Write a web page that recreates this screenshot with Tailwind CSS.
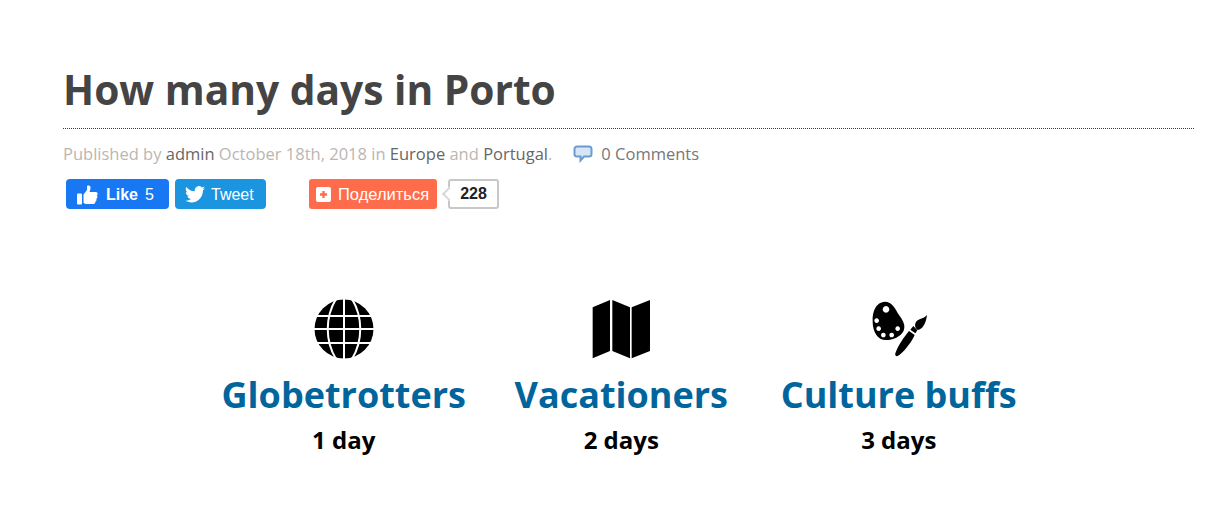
<!DOCTYPE html>
<html lang="en">
<head>
  <meta charset="UTF-8">
  <title>How many days in Porto</title>
  <script src="https://cdn.jsdelivr.net/npm/@tailwindcss/browser@4"></script>
</head>
<body class="bg-white font-['Open_Sans',sans-serif] overflow-hidden">
<div class="pl-[63px] pr-[19px] pt-[62px] h-[512px]">
  <h1 class="text-[40.7px] leading-[54px] font-bold text-[#444444] pb-[12px] border-b border-dotted border-[#223a7a]">How many days in Porto</h1>

  <div class="flex items-center mt-[13px] h-[24px] text-[16.5px] text-[#bbb6b2] whitespace-pre">
    <span>Published by <a class="text-[#666666]">admin</a> October 18th, 2018 in <a class="text-[#666666]">Europe</a> and <a class="text-[#666666]">Portugal</a>.</span>
    <svg class="ml-[21px] mr-[8px]" width="20" height="18" viewBox="0 0 20 18"><path d="M4 1.500h12a2.500 2.500 0 0 1 2.500 2.500v5a2.500 2.500 0 0 1-2.500 2.500h-5l-3.500 4v-4H4A2.500 2.500 0 0 1 1.500 9V4A2.500 2.500 0 0 1 4 1.500z" fill="#d6e6f7" stroke="#6c9bd2" stroke-width="2"/></svg>
    <span class="text-[#777777]">0 Comments</span>
  </div>

  <div class="flex items-center mt-[13px] h-[30px] ml-[3px] font-['Liberation_Sans',sans-serif]">
    <div class="flex items-center w-[103px] h-[30px] rounded-[4px] bg-[#1877f2] text-white text-[16px] pl-[11px] pt-[1px]">
      <svg width="21" height="20" viewBox="0 0 21 20" fill="#fff"><rect x="0" y="8.500" width="5" height="11" rx="1"/><path d="M6.500 9.500 10 5V1.500c0-1.500 3-1.500 3.500.5.300 1.500-.5 3.500-1 5h6.500c2 0 2 3 .8 3.500 1 1 .7 2.700-.5 3.200.6 1.200 0 2.500-1 2.800.3 1.300-.5 2.500-2 2.500H10c-1.500 0-2.500-.5-3.500-1z"/></svg>
      <span class="font-bold ml-[8px]">Like</span><span class="ml-[7px]">5</span>
    </div>
    <div class="flex items-center w-[91px] h-[30px] rounded-[4px] bg-[#1b95e0] text-white text-[16px] pl-[10px] ml-[6px] pt-[1px]">
      <svg width="20" height="17" viewBox="0 0 24 20" fill="#fff"><path d="M24 2.400a9.800 9.800 0 0 1-2.800.8A5 5 0 0 0 23.300.5a9.800 9.800 0 0 1-3.100 1.200 4.900 4.900 0 0 0-8.400 4.500A14 14 0 0 1 1.700.9a4.900 4.900 0 0 0 1.500 6.600 4.900 4.900 0 0 1-2.200-.6c0 2.400 1.700 4.400 3.900 4.900a4.900 4.900 0 0 1-2.200.1 4.900 4.900 0 0 0 4.600 3.400A9.900 9.900 0 0 1 0 17.300 14 14 0 0 0 7.500 19.500c9.100 0 14.300-7.700 14-14.600A10 10 0 0 0 24 2.400z"/></svg>
      <span class="ml-[6px]">Tweet</span>
    </div>
    <div class="flex items-center w-[128px] h-[30px] rounded-[3px] bg-[#ff6c4c] text-white text-[16.5px] pl-[7px] ml-[43px]">
      <span class="flex items-center justify-center w-[15px] h-[15px] rounded-[2px] bg-white">
        <svg width="7" height="7" viewBox="0 0 9 9" fill="#ff6c4c"><path d="M3 0h3v3h3v3H6v3H3V6H0V3h3z"/></svg>
      </span>
      <span class="ml-[7px]">Поделиться</span>
    </div>
    <div class="relative flex items-center justify-center w-[51px] h-[30px] ml-[11px] rounded-[3px] border-2 border-[#c8c8c8] bg-white text-[#222222] text-[16px] font-bold">
      228
      <span class="absolute left-[-6px] top-[8px] w-[10px] h-[10px] rotate-45 bg-white border-l-2 border-b-2 border-[#d8d8d8]"></span>
    </div>
  </div>

  <div class="flex mt-[90px] ml-[142px] text-center">
    <div class="w-[277.5px] flex flex-col items-center">
      <svg width="60" height="60" viewBox="0 0 60 60">
        <circle cx="30" cy="30" r="29.500" fill="#000"/>
        <g fill="none" stroke="#fff" stroke-width="2">
          <path d="M0 30h60M30 0v60M3 17h54M3 44h54"/>
          <path d="M22 0C11 18 11 42 22 60M38 0c11 18 11 42 0 60"/>
        </g>
      </svg>
      <h2 class="text-[36px] leading-[48px] font-bold text-[#00659c] mt-[12px] whitespace-nowrap">Globetrotters</h2>
      <p class="text-[24px] leading-[30px] font-bold text-black mt-[6px]">1 day</p>
    </div>
    <div class="w-[277.5px] flex flex-col items-center">
      <svg width="60" height="60" viewBox="33 27 180 180" fill="#000">
        <path d="M38 52 90 30V183L38 205zM97 30 150 52V205L97 183zM155 52 210 30V183L155 205z"/>
      </svg>
      <h2 class="text-[36px] leading-[48px] font-bold text-[#00659c] mt-[12px] whitespace-nowrap">Vacationers</h2>
      <p class="text-[24px] leading-[30px] font-bold text-black mt-[6px]">2 days</p>
    </div>
    <div class="w-[277.5px] flex flex-col items-center">
      <svg width="60" height="60" viewBox="24 27 180 180" fill="#000">
        <path fill-rule="evenodd" d="M70 35C95 35 105 60 112 72 125 90 135 105 128 122 120 140 95 150 75 150 50 150 35 125 35 95 33 65 45 37 70 35zM75 48a10 10 0 1 0 .01 0zM47 85a7 7 0 1 0 .01 0zM53 109a7 7 0 1 0 .01 0zM67 128a7 7 0 1 0 .01 0zM92 128a7 7 0 1 0 .01 0zM110 109a7 7 0 1 0 .01 0z"/>
        <path d="M198 75C190 85 178 85 168 92 160 100 160 112 170 120 185 118 195 100 198 75zM157 108 169 121 163 130 148 119zM144 123 161 135C150 160 125 190 110 198 103 200 102 195 103 190 112 165 130 140 144 123z"/>
      </svg>
      <h2 class="text-[36px] leading-[48px] font-bold text-[#00659c] mt-[12px] whitespace-nowrap">Culture buffs</h2>
      <p class="text-[24px] leading-[30px] font-bold text-black mt-[6px]">3 days</p>
    </div>
  </div>
</div>
</body>
</html>
